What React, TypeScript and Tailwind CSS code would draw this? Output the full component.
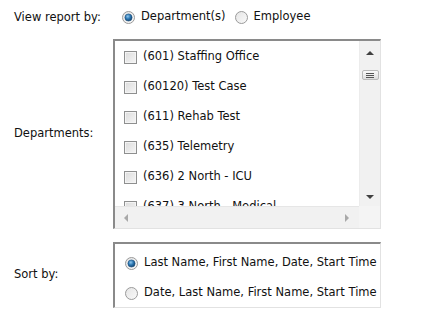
import React from "react";

const departments = [
  "(601) Staffing Office",
  "(60120) Test Case",
  "(611) Rehab Test",
  "(635) Telemetry",
  "(636) 2 North - ICU",
  "(637) 3 North - Medical",
];

const Radio = ({ checked }: { checked?: boolean }) => (
  <svg width="13" height="13" viewBox="0 0 13 13" className="shrink-0">
    <defs>
      <linearGradient id="rb" x1="0" y1="0" x2="1" y2="1">
        <stop offset="0" stopColor="#e4e4e4" />
        <stop offset="1" stopColor="#fafafa" />
      </linearGradient>
      <radialGradient id="rd" cx="0.4" cy="0.35" r="0.7">
        <stop offset="0" stopColor="#8fc6ec" />
        <stop offset="0.5" stopColor="#2b77b3" />
        <stop offset="1" stopColor="#123e66" />
      </radialGradient>
    </defs>
    <circle cx="6.5" cy="6.5" r="6" fill="url(#rb)" stroke="#9a9a9a" strokeWidth="1" />
    {checked && <circle cx="6.5" cy="6.5" r="3.6" fill="url(#rd)" stroke="#1d4f7c" strokeWidth="0.6" />}
  </svg>
);

const Checkbox = () => (
  <span className="block w-[13px] h-[13px] shrink-0 border border-[#8e8f8f] bg-gradient-to-br from-[#dcdcdc] to-[#f5f5f5] shadow-[inset_0_0_0_1px_#f4f4f4]" />
);

const Tri = ({ dir }: { dir: "up" | "down" | "left" | "right" }) => {
  const pts =
    dir === "up" ? "0,5 4,1 8,5" : dir === "down" ? "0,1 4,5 8,1" : dir === "left" ? "5,0 1,4 5,8" : "1,0 5,4 1,8";
  const size = dir === "up" || dir === "down" ? { w: 8, h: 6 } : { w: 6, h: 8 };
  return (
    <svg width={size.w} height={size.h} viewBox={`0 0 ${size.w} ${size.h}`}>
      <polygon points={pts} fill={dir === "left" || dir === "right" ? "#a8a8a8" : "#404040"} />
    </svg>
  );
};

export default function App() {
  return (
    <div className="w-[427px] h-[312px] bg-white text-[11.5px] text-[#111] font-['DejaVu_Sans',Verdana,sans-serif] pl-[14px] pt-[10px]">
      <div className="grid grid-cols-[99px_auto] items-center">
        <div className="leading-[14px]">View report by:</div>
        <div className="flex items-center h-[14px] pl-[9px]">
          <Radio checked />
          <span className="ml-[6px]">Department(s)</span>
          <span className="ml-[9px]"><Radio /></span>
          <span className="ml-[6px]">Employee</span>
        </div>

        <div className="mt-[15px]">Departments:</div>
        <div className="mt-[15px] w-[268px] h-[190px] border-t-2 border-l-2 border-t-[#8a8a8a] border-l-[#8a8a8a] border-r border-b border-r-[#e2e2e2] border-b-[#e2e2e2] flex flex-col">
          <div className="flex flex-1 min-h-0">
            <div className="flex-1 overflow-hidden pl-[9px] pt-[1px]">
              {departments.map((d) => (
                <div key={d} className="flex items-center h-[30px] whitespace-nowrap">
                  <Checkbox />
                  <span className="ml-[6px]">{d}</span>
                </div>
              ))}
            </div>
            <div className="w-[21px] bg-[#f1f1f1] border-l border-[#ececec] flex flex-col items-center">
              <div className="mt-[9px]"><Tri dir="up" /></div>
              <div className="mt-[14px] w-[17px] h-[10px] border border-[#b9b9b9] bg-gradient-to-b from-[#fafafa] to-[#dedede] rounded-[2px] flex flex-col items-center justify-center gap-[1px]">
                <span className="block w-[8px] h-px bg-[#555]" />
                <span className="block w-[8px] h-px bg-[#555]" />
                <span className="block w-[8px] h-px bg-[#555]" />
              </div>
              <div className="mt-auto mb-[6px]"><Tri dir="down" /></div>
            </div>
          </div>
          <div className="flex h-[22px] shrink-0">
            <div className="flex-1 bg-[#f1f1f1] border-t border-[#e6e6e6] flex items-center justify-between pl-[8px] pr-[9px]">
              <Tri dir="left" />
              <Tri dir="right" />
            </div>
            <div className="w-[21px] bg-[#f4f4f4]" />
          </div>
        </div>

        <div className="mt-[13px]">Sort by:</div>
        <div className="mt-[13px] w-[268px] h-[66px] border-t-2 border-l-2 border-t-[#8a8a8a] border-l-[#8a8a8a] border-r border-b border-r-[#e2e2e2] border-b-[#e2e2e2] pl-[10px] pt-[4px]">
          <div className="flex items-center h-[30px] whitespace-nowrap">
            <Radio checked />
            <span className="ml-[6px]">Last Name, First Name, Date, Start Time</span>
          </div>
          <div className="flex items-center h-[30px] whitespace-nowrap">
            <Radio />
            <span className="ml-[6px]">Date, Last Name, First Name, Start Time</span>
          </div>
        </div>
      </div>
    </div>
  );
}
